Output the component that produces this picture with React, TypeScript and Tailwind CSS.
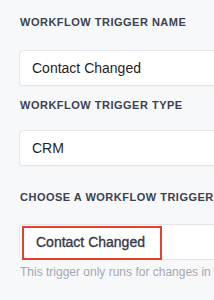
export default function App() {
  return (
    <div className="min-h-screen w-[214px] overflow-hidden bg-[#f7f8fa] pl-[19px] pt-[14px] font-['Liberation_Sans',Arial,sans-serif]">
      {/* Trigger name */}
      <p className="ml-px text-[11px] font-bold uppercase leading-4 tracking-[0.5px] text-[#3b4250]">
        Workflow Trigger Name
      </p>
      <div className="mt-[20px] flex h-[36px] w-[260px] items-center rounded-[4px] border border-[#e3e5e9] bg-white pl-[12px] text-[14px] text-[#1f2329] shadow-[0_1px_1px_rgba(0,0,0,0.03)]">
        Contact Changed
      </div>

      {/* Trigger type */}
      <p className="ml-px mt-[11px] text-[11px] font-bold uppercase leading-4 tracking-[0.5px] text-[#3b4250]">
        Workflow Trigger Type
      </p>
      <div className="mt-[17px] flex h-[36px] w-[260px] items-center rounded-[4px] border border-[#e3e5e9] bg-white pl-[12px] text-[14px] text-[#1f2329] shadow-[0_1px_1px_rgba(0,0,0,0.03)]">
        CRM
      </div>

      {/* Choose trigger */}
      <p className="ml-px mt-[23px] whitespace-nowrap text-[11px] font-bold uppercase leading-4 tracking-[0.5px] text-[#3b4250]">
        Choose a workflow trigger
      </p>
      <div className="relative mt-[19px] flex h-[36px] w-[260px] items-center rounded-[4px] border border-[#e3e5e9] bg-white pl-[16px] text-[14px] text-[#343b49] [-webkit-text-stroke:0.35px_#343b49]">
        Contact Changed
        <div className="absolute left-[2px] top-[1px] h-[34px] w-[140px] border-2 border-[#e3412d]" />
      </div>
      <p className="ml-px mt-[4px] whitespace-nowrap text-[12px] leading-4 text-[#a3a8b0]">
        This trigger only runs for changes in
      </p>
    </div>
  );
}
